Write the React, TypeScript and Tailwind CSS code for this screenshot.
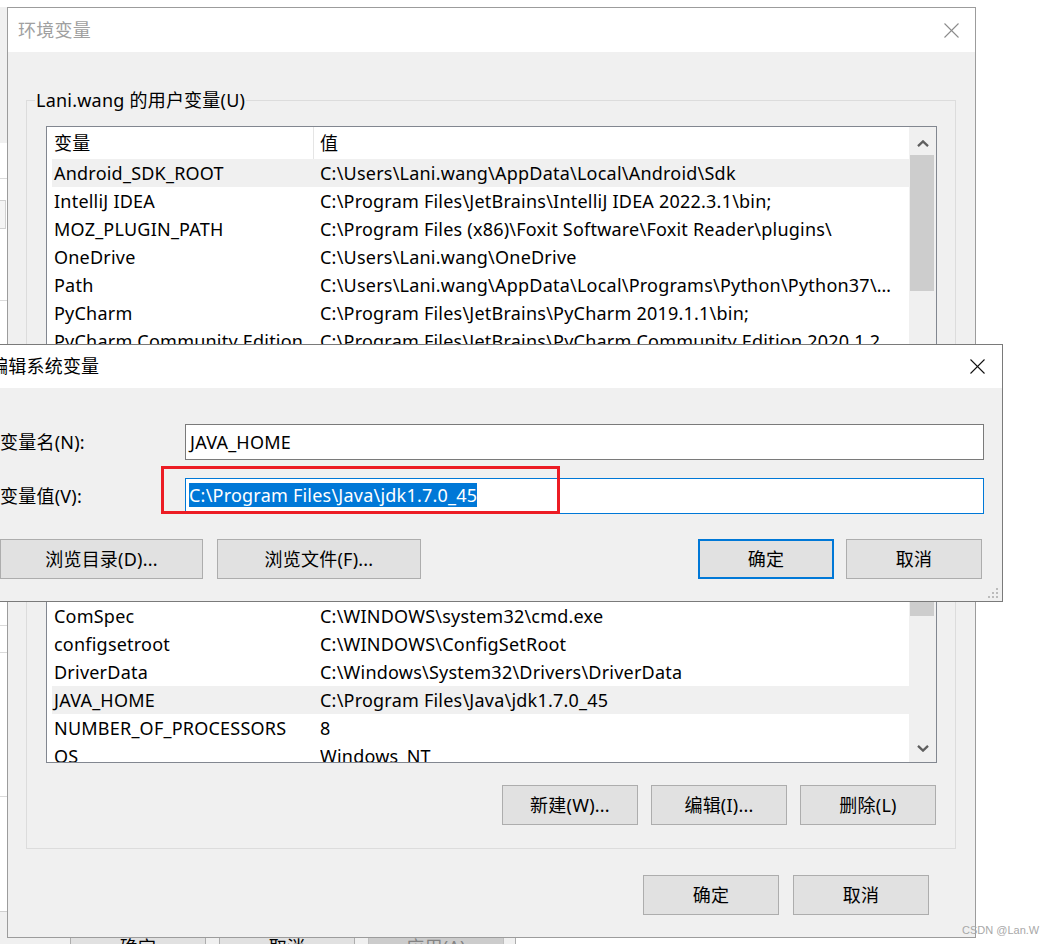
import React from "react";

type Row = { name: string; value: string; hl?: boolean };

const topRows: Row[] = [
  { name: "Android_SDK_ROOT", value: "C:\\Users\\Lani.wang\\AppData\\Local\\Android\\Sdk", hl: true },
  { name: "IntelliJ IDEA", value: "C:\\Program Files\\JetBrains\\IntelliJ IDEA 2022.3.1\\bin;" },
  { name: "MOZ_PLUGIN_PATH", value: "C:\\Program Files (x86)\\Foxit Software\\Foxit Reader\\plugins\\" },
  { name: "OneDrive", value: "C:\\Users\\Lani.wang\\OneDrive" },
  { name: "Path", value: "C:\\Users\\Lani.wang\\AppData\\Local\\Programs\\Python\\Python37\\Scripts\\;C:\\Users\\Lani.wang" },
  { name: "PyCharm", value: "C:\\Program Files\\JetBrains\\PyCharm 2019.1.1\\bin;" },
  { name: "PyCharm Community Edition", value: "C:\\Program Files\\JetBrains\\PyCharm Community Edition 2020.1.2\\bin;" },
  { name: "TEMP", value: "C:\\Users\\Lani.wang\\AppData\\Local\\Temp" },
  { name: "TMP", value: "C:\\Users\\Lani.wang\\AppData\\Local\\Temp" },
];

const bottomRows: Row[] = [
  { name: "CLASSPATH", value: ".;%JAVA_HOME%\\lib;%JAVA_HOME%\\lib\\tools.jar" },
  { name: "ComSpec", value: "C:\\WINDOWS\\system32\\cmd.exe" },
  { name: "configsetroot", value: "C:\\WINDOWS\\ConfigSetRoot" },
  { name: "DriverData", value: "C:\\Windows\\System32\\Drivers\\DriverData" },
  { name: "JAVA_HOME", value: "C:\\Program Files\\Java\\jdk1.7.0_45", hl: true },
  { name: "NUMBER_OF_PROCESSORS", value: "8" },
  { name: "OS", value: "Windows_NT" },
  { name: "Path", value: "C:\\WINDOWS\\system32;C:\\WINDOWS" },
];

function XIcon({ color }: { color: string }) {
  return (
    <svg width="15" height="15" viewBox="0 0 15 15">
      <line x1="0.5" y1="0.5" x2="14.5" y2="14.5" stroke={color} strokeWidth="1.1" />
      <line x1="14.5" y1="0.5" x2="0.5" y2="14.5" stroke={color} strokeWidth="1.1" />
    </svg>
  );
}

function Chevron({ up }: { up?: boolean }) {
  return (
    <svg width="12" height="7" viewBox="0 0 12 7">
      <polyline
        points={up ? "1,6.2 6,1.4 11,6.2" : "1,0.8 6,5.6 11,0.8"}
        fill="none"
        stroke="#5f5f5f"
        strokeWidth="2.3"
      />
    </svg>
  );
}

function Btn({
  children,
  className = "",
  primary,
  disabled,
}: {
  children: React.ReactNode;
  className?: string;
  primary?: boolean;
  disabled?: boolean;
}) {
  const border = primary
    ? "border-2 border-[#0078d7] bg-[#e1e1e1]"
    : disabled
    ? "border border-[#bfbfbf] bg-[#cccccc] text-[#838383]"
    : "border border-[#adadad] bg-[#e1e1e1]";
  return (
    <div className={`h-[40px] flex items-center justify-center text-[18px] leading-[24px] shrink-0 ${border} ${className}`}>
      {children}
    </div>
  );
}

function ListRows({ rows }: { rows: Row[] }) {
  return (
    <>
      {rows.map((r, i) => (
        <div
          key={i}
          className={`ml-[5px] h-[28px] flex items-center text-[18px] leading-[28px] text-black shrink-0 ${
            r.hl ? "bg-[#f0f0f0]" : ""
          }`}
        >
          <div className="w-[268px] pl-[2px] whitespace-nowrap overflow-hidden shrink-0">{r.name}</div>
          <div className="flex-1 min-w-0 truncate pr-[10px]">{r.value}</div>
        </div>
      ))}
    </>
  );
}

function Header() {
  return (
    <div className="h-[32px] flex text-[18px] leading-[32px] shrink-0">
      <div className="w-[267px] pl-[7px] border-r border-[#e5e5e5]">变量</div>
      <div className="pl-[6px]">值</div>
    </div>
  );
}

export default function App() {
  return (
    <div className="relative w-[1045px] h-[944px] overflow-hidden bg-white font-['Noto_Sans','Noto_Sans_CJK_SC',sans-serif] tracking-[0.22px] text-black">
      {/* background window (System Properties) */}
      <div className="absolute left-[-300px] top-[7px] w-[816px] h-[960px] bg-[#f0f0f0] border-r border-[#adadad] flex flex-col">
        <div className="mt-[136px] mx-[10px] h-[770px] bg-white border-b border-[#cfcfcf] flex flex-col">
          <div className="h-[35px]" />
          <div className="h-[1px] bg-[#dadada]" />
          <div className="h-[21px]" />
          <div className="h-[29px] w-[296px] border border-[#d0d0d0] bg-[#f5f5f5]" />
          <div className="h-[71px]" />
          <div className="h-[1px] bg-[#dadada]" />
          <div className="h-[324px]" />
          <div className="h-[1px] bg-[#dadada]" />
          <div className="h-[26px]" />
          <div className="h-[1px] bg-[#dadada]" />
          <div className="h-[143px]" />
          <div className="h-[1px] bg-[#dadada]" />
        </div>
        <div className="mt-[15px] flex justify-end pr-[11px] gap-[13px]">
          <Btn className="w-[136px]">确定</Btn>
          <Btn className="w-[136px]">取消</Btn>
          <Btn className="w-[136px]" disabled>
            应用(A)
          </Btn>
        </div>
      </div>

      {/* main window: 环境变量 */}
      <div className="absolute left-[7px] top-[7px] w-[969px] h-[931px] border border-[#9c9c9c] bg-[#f0f0f0] flex flex-col">
        <div className="h-[44px] bg-white flex items-center justify-between pl-[10px] pr-[16px] shrink-0">
          <span className="text-[18px] leading-[24px] text-[#a0a0a0]">环境变量</span>
          <XIcon color="#8c8c8c" />
        </div>
        <div className="flex-1 flex flex-col">
          <div className="relative mt-[48px] ml-[18px] w-[930px] h-[749px] border border-[#dcdcdc] flex flex-col pl-[19px] pr-[18px] pt-[25px]">
            <span className="absolute left-[8px] top-[-13px] px-[1px] bg-[#f0f0f0] text-[18px] leading-[24px]">
              Lani.wang 的用户变量(U)
            </span>

            {/* user variables list */}
            <div className="h-[400px] border border-[#828790] bg-white flex shrink-0">
              <div className="flex-1 min-w-0 flex flex-col overflow-hidden">
                <Header />
                <ListRows rows={topRows} />
              </div>
              <div className="w-[27px] bg-[#f0f0f0] flex flex-col shrink-0">
                <div className="h-[28px] flex justify-center pt-[13px]">
                  <Chevron up />
                </div>
                <div className="h-[136px] ml-[1px] mr-[2px] bg-[#cdcdcd]" />
              </div>
            </div>

            {/* system variables list */}
            <div className="mt-[15px] h-[222px] border border-[#828790] bg-white flex shrink-0">
              <div className="flex-1 min-w-0 flex flex-col overflow-hidden">
                <Header />
                <ListRows rows={bottomRows} />
              </div>
              <div className="w-[27px] bg-[#f0f0f0] flex flex-col shrink-0">
                <div className="h-[26px]" />
                <div className="h-[48px] ml-[1px] mr-[2px] bg-[#cdcdcd]" />
                <div className="flex-1" />
                <div className="h-[26px] flex justify-center pt-[9px]">
                  <Chevron />
                </div>
              </div>
            </div>

            <div className="mt-[22px] flex justify-end gap-[13px] pr-[1px]">
              <Btn className="w-[136px]">新建(W)...</Btn>
              <Btn className="w-[136px]">编辑(I)...</Btn>
              <Btn className="w-[136px]">删除(L)</Btn>
            </div>
          </div>

          <div className="mt-[26px] flex justify-end gap-[14px] pr-[46px]">
            <Btn className="w-[136px]">确定</Btn>
            <Btn className="w-[136px]">取消</Btn>
          </div>
        </div>
      </div>

      {/* overlay dialog: 编辑系统变量 */}
      <div className="absolute left-[-20px] top-[344px] w-[1023px] h-[258px] border border-[#7a7a7a] bg-[#f0f0f0] flex flex-col">
        <div className="h-[43px] bg-white flex items-center justify-between pl-[9px] pr-[17px] pb-[1px] shrink-0">
          <span className="text-[18px] leading-[24px]">编辑系统变量</span>
          <XIcon color="#111111" />
        </div>
        <div className="relative flex-1 flex flex-col pl-[19px]">
          <div className="mt-[36px] flex items-center h-[36px]">
            <div className="w-[185px] text-[18px] leading-[24px]">变量名(N):</div>
            <div className="w-[799px] h-[36px] border border-[#7a7a7a] bg-white flex items-center pl-[4px] pb-[1px] text-[18px] leading-[24px]">
              JAVA_HOME
            </div>
          </div>
          <div className="mt-[18px] flex items-center h-[36px]">
            <div className="w-[185px] text-[18px] leading-[24px]">变量值(V):</div>
            <div className="w-[799px] h-[36px] border border-[#0078d7] bg-white flex items-center pl-[3px] pb-[2px] text-[18px]">
              <span className="bg-[#0078d7] text-white leading-[24px]">C:\Program Files\Java\jdk1.7.0_45</span>
            </div>
          </div>
          <div className="mt-[25px] flex h-[40px] pr-[20px]">
            <Btn className="w-[203px]">浏览目录(D)...</Btn>
            <Btn className="w-[204px] ml-[14px]">浏览文件(F)...</Btn>
            <div className="flex-1" />
            <Btn className="w-[136px]" primary>
              确定
            </Btn>
            <Btn className="w-[136px] ml-[12px]">取消</Btn>
          </div>
          <svg className="absolute right-[3px] bottom-[2px]" width="11" height="11" viewBox="0 0 11 11">
            <rect x="8" y="0" width="2" height="2" fill="#bcbcbc" />
            <rect x="8" y="4" width="2" height="2" fill="#bcbcbc" />
            <rect x="4" y="4" width="2" height="2" fill="#bcbcbc" />
            <rect x="8" y="8" width="2" height="2" fill="#bcbcbc" />
            <rect x="4" y="8" width="2" height="2" fill="#bcbcbc" />
            <rect x="0" y="8" width="2" height="2" fill="#bcbcbc" />
          </svg>
        </div>
      </div>

      {/* red annotation box */}
      <div className="absolute left-[161px] top-[466px] w-[399px] h-[48px] border-[3px] border-[#ec1c24]" />

      {/* watermark */}
      <div className="absolute left-[962px] top-[923px] text-[11px] leading-[14px] tracking-normal text-[#a8a8a8] font-['Liberation_Sans',sans-serif]">
        CSDN @Lan.W
      </div>
    </div>
  );
}
